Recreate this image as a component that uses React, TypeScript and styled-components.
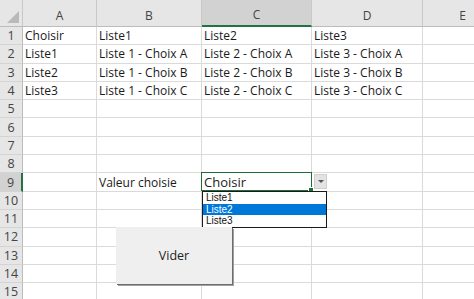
import React from 'react';
import styled, { createGlobalStyle } from 'styled-components';

const GlobalStyle = createGlobalStyle`
html, body {
  margin: 0;
  padding: 0;
  background: #fff;
}
body {
  font-family: "Open Sans", "Noto Sans", sans-serif;
}
`;

const Sheet = styled.div`
position: relative;
width: 474px;
height: 299px;
overflow: hidden;
background: #fff;
`;

const Grid = styled.div`
display: grid;
grid-template-columns: 23px 74px 105px 110px 111px 80px;
grid-template-rows: 27px repeat(15, 18.3px);
`;

const Corner = styled.div`
position: relative;
background: #e6e6e6;
border-right: 1px solid #c8c8c8;
border-bottom: 1px solid #bcbcbc;

&:after {
  content: "";
  position: absolute;
  right: 3px;
  bottom: 3px;
  border-style: solid;
  border-width: 0 0 12px 12px;
  border-color: transparent transparent #b9b9b9 transparent;
}
`;

const ColHead = styled.div<{ $active?: boolean }>`
display: flex;
align-items: center;
justify-content: center;
padding-top: 4px;
font-size: 12px;
color: #444;
background: ${p => (p.$active ? '#d2d2d2' : '#e6e6e6')};
border-right: 1px solid #c8c8c8;
border-bottom: ${p => (p.$active ? '2px solid #217346' : '1px solid #bcbcbc')};
`;

const RowHead = styled.div<{ $active?: boolean }>`
display: flex;
align-items: center;
justify-content: center;
font-size: 12.5px;
color: #444;
background: ${p => (p.$active ? '#d2d2d2' : '#e6e6e6')};
border-right: ${p => (p.$active ? '2px solid #217346' : '1px solid #bcbcbc')};
border-bottom: 1px solid #d4d4d4;
`;

const Cell = styled.div`
display: flex;
align-items: center;
padding-left: 2px;
font-size: 12px;
color: #1a1a1a;
white-space: nowrap;
border-right: 1px solid #dadada;
border-bottom: 1px solid #dadada;
`;

const ActiveCell = styled.div`
position: absolute;
left: 201px;
top: 172px;
width: 111px;
height: 19px;
border: 1px solid #1e6b3c;
background: #fff;
display: flex;
align-items: center;
padding-left: 2px;
font-size: 13px;
color: #222;
box-sizing: border-box;

&:after {
  content: "";
  position: absolute;
  right: -3px;
  bottom: -3px;
  width: 4px;
  height: 4px;
  background: #1e6b3c;
  border: 1px solid #fff;
}
`;

const DropButton = styled.div`
position: absolute;
left: 314px;
top: 174px;
width: 13px;
height: 15px;
background: #e3e3e3;
border: 1px solid #d0d0d0;
box-sizing: border-box;
display: flex;
align-items: center;
justify-content: center;
`;

const Arrow = styled.div`
width: 0;
height: 0;
border-left: 3px solid transparent;
border-right: 3px solid transparent;
border-top: 3px solid #555;
`;

const ListBox = styled.div`
position: absolute;
left: 202px;
top: 191px;
width: 125px;
box-sizing: border-box;
border: 1px solid #1a1a1a;
background: #fff;
display: flex;
flex-direction: column;
`;

const ListItem = styled.div<{ $selected?: boolean }>`
height: 11.6px;
line-height: 11.6px;
padding-left: 3px;
font-size: 10px;
font-family: "Liberation Sans", Arial, sans-serif;
color: ${p => (p.$selected ? '#fff' : '#111')};
background: ${p => (p.$selected ? '#0078d7' : 'transparent')};
`;

const ClearButton = styled.button`
position: absolute;
left: 116px;
top: 227px;
width: 116px;
height: 57px;
border: none;
background: #efefef;
box-shadow: 1px 1px 0 #6d6d6d, 2px 2px 0 #a0a0a0;
font-family: "Open Sans", "Noto Sans", sans-serif;
font-size: 12.5px;
color: #222;
padding: 0;
`;

const columns = ['A', 'B', 'C', 'D', 'E'];

const data: Record<number, string[]> = {
  1: ['Choisir', 'Liste1', 'Liste2', 'Liste3', ''],
  2: ['Liste1', 'Liste 1 - Choix A', 'Liste 2 - Choix A', 'Liste 3 - Choix A', ''],
  3: ['Liste2', 'Liste 1 - Choix B', 'Liste 2 - Choix B', 'Liste 3 - Choix B', ''],
  4: ['Liste3', 'Liste 1 - Choix C', 'Liste 2 - Choix C', 'Liste 3 - Choix C', ''],
  9: ['', 'Valeur choisie', '', '', ''],
};

const App = () => {
  const rows = Array.from({ length: 15 }, (_, i) => i + 1);

  return (
    <Sheet>
      <GlobalStyle />
      <Grid>
        <Corner />
        {columns.map(c => (
          <ColHead key={c} $active={c === 'C'}>{c}</ColHead>
        ))}
        {rows.map(r => (
          <React.Fragment key={r}>
            <RowHead $active={r === 9}>{r}</RowHead>
            {columns.map((c, i) => (
              <Cell key={c}>{data[r] ? data[r][i] : ''}</Cell>
            ))}
          </React.Fragment>
        ))}
      </Grid>
      <ActiveCell>Choisir</ActiveCell>
      <DropButton><Arrow /></DropButton>
      <ListBox>
        <ListItem>Liste1</ListItem>
        <ListItem $selected>Liste2</ListItem>
        <ListItem>Liste3</ListItem>
      </ListBox>
      <ClearButton>Vider</ClearButton>
    </Sheet>
  );
};

export default App;
